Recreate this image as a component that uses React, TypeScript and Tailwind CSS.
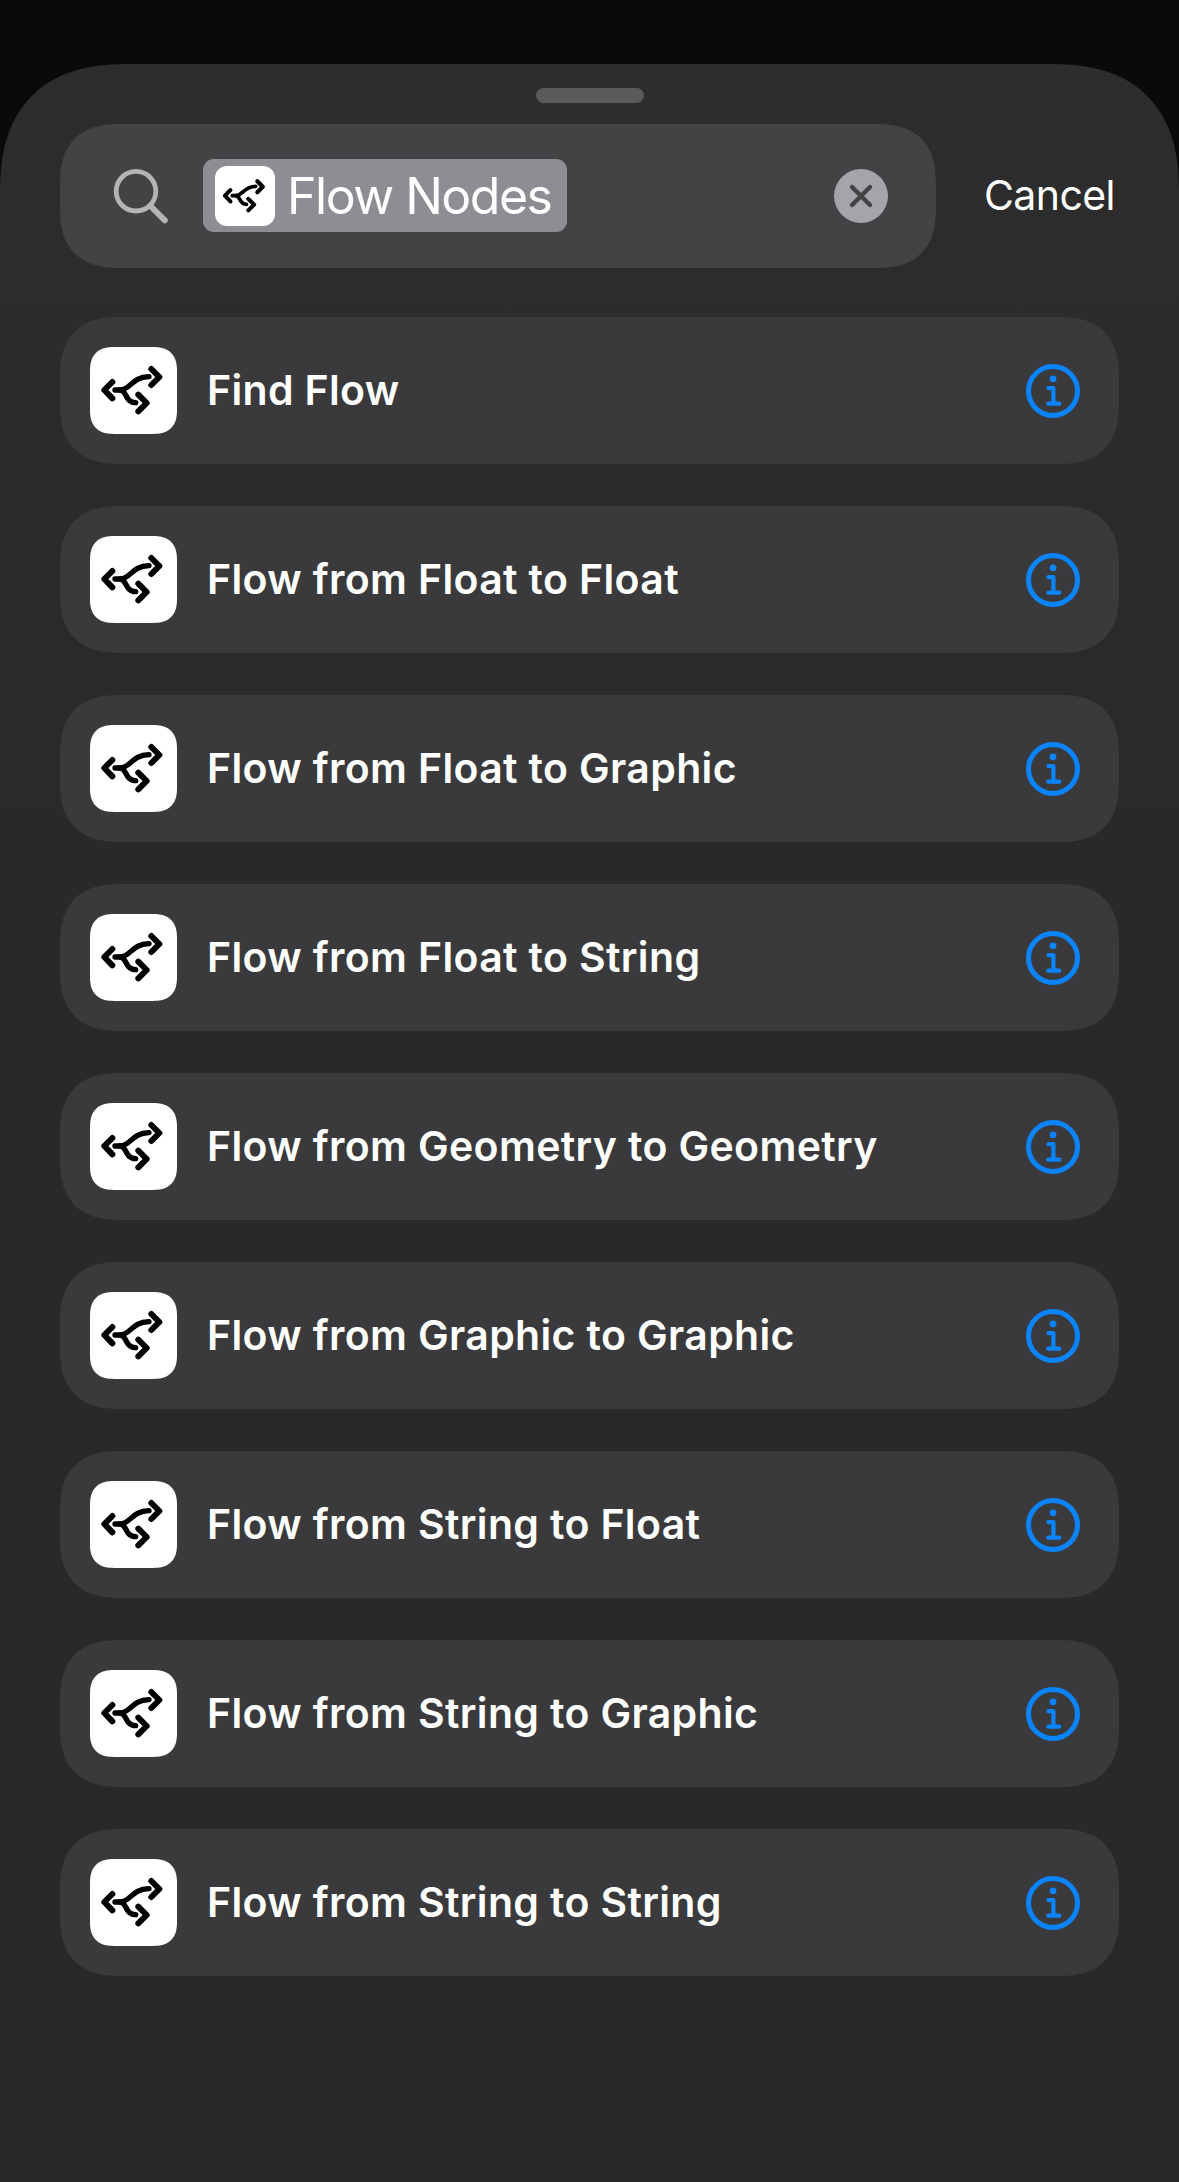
import { clsx } from "clsx";

const ACTIONS = [
  "Find Flow",
  "Flow from Float to Float",
  "Flow from Float to Graphic",
  "Flow from Float to String",
  "Flow from Geometry to Geometry",
  "Flow from Graphic to Graphic",
  "Flow from String to Float",
  "Flow from String to Graphic",
  "Flow from String to String",
];

function FlowIcon({ className }: { className?: string }) {
  return (
    <div className={clsx("shrink-0 bg-white text-black", className)}>
      <svg
        viewBox="0 0 261 261"
        fill="none"
        stroke="currentColor"
        strokeLinecap="round"
        strokeLinejoin="round"
        className="size-full"
      >
        <g strokeWidth="18">
          <path d="M67 105L43 129L67 154" />
          <path d="M184 66L208 90L184 114" />
          <path d="M145 143L170 168L145 193" />
        </g>
        <g strokeWidth="16">
          <path d="M75 129H90C122 129 124 90 177 89" />
          <path d="M90 129C112 131 104 166 137 167" />
        </g>
      </svg>
    </div>
  );
}

function InfoButton() {
  return (
    <button type="button" aria-label="Info" className="text-[#0a84ff]">
      <svg
        viewBox="0 0 54 54"
        fill="none"
        stroke="currentColor"
        strokeLinecap="round"
        strokeLinejoin="round"
        className="size-[54px]"
      >
        <circle cx="27" cy="27" r="24.5" strokeWidth="5" />
        <circle cx="27" cy="14.8" r="3.4" fill="currentColor" stroke="none" />
        <path d="M22.5 24.2H27.4V39.5M22.3 39.7H33.3" strokeWidth="4.2" />
      </svg>
    </button>
  );
}

function SearchBar() {
  return (
    <div className="flex h-36 w-[876px] shrink-0 items-center rounded-[60px] bg-[#434345] pr-12 pl-[53px] [corner-shape:superellipse(1.3)]">
      <svg
        viewBox="0 0 56 56"
        fill="none"
        stroke="#b4b4b7"
        strokeLinecap="round"
        className="size-14 shrink-0"
      >
        <circle cx="23" cy="23.2" r="19.8" strokeWidth="4.8" />
        <path d="M38 38.5L51.8 52.3" strokeWidth="6" />
      </svg>
      <div className="mb-px ml-[34px] flex h-[73px] w-[364px] items-center rounded-[11px] bg-[#8e8d94] pl-3">
        <FlowIcon className="size-15 rounded-[12px]" />
        <span className="ml-3 text-[50px] leading-none tracking-[-1.5px] whitespace-nowrap">
          Flow Nodes
        </span>
      </div>
      <button type="button" aria-label="Clear" className="ml-auto">
        <svg viewBox="0 0 54 54" className="size-[54px]">
          <circle cx="27" cy="27" r="27" fill="#a5a4ab" />
          <path
            d="M18 18L36 36M36 18L18 36"
            stroke="#434345"
            strokeWidth="4.4"
            strokeLinecap="round"
          />
        </svg>
      </button>
    </div>
  );
}

function ActionRow({ title }: { title: string }) {
  return (
    <li className="flex h-[147px] items-center rounded-[60px] bg-[#3a3a3c] pr-[39px] pl-[30px] [corner-shape:superellipse(1.3)]">
      <FlowIcon className="size-[87px] rounded-[24px] [corner-shape:superellipse(1.3)]" />
      <span className="ml-[30px] grow text-[41px] leading-none font-semibold tracking-[0.35px] whitespace-nowrap">
        {title}
      </span>
      <InfoButton />
    </li>
  );
}

export default function App() {
  return (
    <div className="h-[2182px] w-[1179px] overflow-hidden bg-[#0a0a0a] pt-16 font-['Inter',sans-serif] text-white">
      <div className="flex h-full flex-col rounded-t-[130px] bg-linear-to-b from-[#2d2d2d] to-[#29292b] to-40% px-[60px] [corner-shape:superellipse(1.3)]">
        <div className="mt-6 h-[15px] w-27 self-center rounded-full bg-[#5a5a5a]" />
        <div className="mt-[21px] flex items-center">
          <SearchBar />
          <button
            type="button"
            className="mb-0.5 ml-12 text-[41px] leading-none tracking-[-0.6px] whitespace-nowrap"
          >
            Cancel
          </button>
        </div>
        <ul className="mt-[49px] flex flex-col gap-[42px]">
          {ACTIONS.map((title) => (
            <ActionRow key={title} title={title} />
          ))}
        </ul>
      </div>
    </div>
  );
}
